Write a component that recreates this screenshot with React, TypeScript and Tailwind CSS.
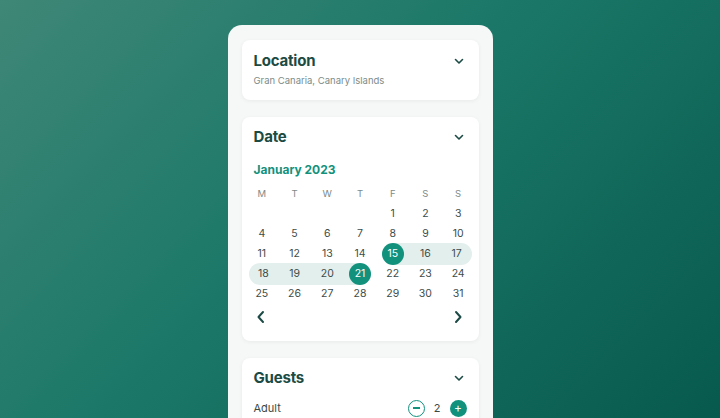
import React from "react";

const font = { fontFamily: "Inter, 'Noto Sans', sans-serif" };

function ChevronDown() {
  return (
    <svg width="12" height="12" viewBox="0 0 12 12" fill="none">
      <path d="M2.5 4.5 6 8l3.5-3.5" stroke="#1b4b44" strokeWidth="1.6" strokeLinecap="round" strokeLinejoin="round" />
    </svg>
  );
}

function Arrow({ dir }: { dir: "left" | "right" }) {
  return (
    <svg width="10" height="14" viewBox="0 0 10 14" fill="none">
      <path
        d={dir === "left" ? "M7 2 2.5 7 7 12" : "M3 2l4.5 5L3 12"}
        stroke="#1b4b44"
        strokeWidth="2"
        strokeLinecap="round"
        strokeLinejoin="round"
      />
    </svg>
  );
}

const weekdays = ["M", "T", "W", "T", "F", "S", "S"];

const weeks: (number | null)[][] = [
  [null, null, null, null, 1, 2, 3],
  [4, 5, 6, 7, 8, 9, 10],
  [11, 12, 13, 14, 15, 16, 17],
  [18, 19, 20, 21, 22, 23, 24],
  [25, 26, 27, 28, 29, 30, 31],
];

const START = 15;
const END = 21;

function DayCell({ day, col }: { day: number | null; col: number }) {
  if (day === null) return <div className="h-5" />;
  const isStart = day === START;
  const isEnd = day === END;
  const inRange = day > START && day < END;
  let band = "w-full";
  if (isStart) band = "w-full bg-[linear-gradient(to_right,transparent_50%,#e3efed_50%)]";
  else if (isEnd) band = "w-full bg-[linear-gradient(to_right,#e3efed_50%,transparent_50%)]";
  else if (inRange) {
    band = "bg-[#e3efed]";
    if (col === 6) band += " rounded-r-full w-[calc(100%-3px)] mr-[3px]";
    else if (col === 0) band += " rounded-l-full w-[calc(100%-3px)] ml-[3px]";
    else band += " w-full";
  }
  return (
    <div className="h-5 flex items-center justify-center">
      <div className={`h-[22px] flex items-center justify-center ${band}`}>
        {isStart || isEnd ? (
          <div className="h-[22px] w-[22px] rounded-full bg-[#12917d] text-white flex items-center justify-center text-[10.5px]">
            {day}
          </div>
        ) : (
          <span className="text-[10.5px] text-[#3d4c49]">{day}</span>
        )}
      </div>
    </div>
  );
}

export default function App() {
  return (
    <div
      style={font}
      className="w-[720px] h-[418px] overflow-hidden bg-[linear-gradient(135deg,#3f8777_0%,#1b7868_45%,#07594d_100%)] flex justify-center pt-[25px]"
    >
      <div className="w-[265px] h-[420px] rounded-t-[14px] bg-[#f6f7f7] px-[14px] pt-[15px] flex flex-col gap-[17px]">
        {/* Location */}
        <div className="bg-white rounded-[8px] shadow-[0_1px_4px_rgba(0,0,0,0.06)] px-3 pt-[11px] pb-[12px]">
          <div className="flex items-center justify-between h-5">
            <span className="text-[15px] font-bold text-[#1b4b44] tracking-[-0.2px]">Location</span>
            <span className="pr-[2px]"><ChevronDown /></span>
          </div>
          <div className="mt-[3px] h-[14px] leading-[14px] text-[9.5px] text-[#7d8c89]">Gran Canaria, Canary Islands</div>
        </div>

        {/* Date */}
        <div className="bg-white rounded-[8px] shadow-[0_1px_4px_rgba(0,0,0,0.06)] px-3 pt-[10px] pb-4">
          <div className="flex items-center justify-between h-5">
            <span className="text-[15px] font-bold text-[#1b4b44] tracking-[-0.2px]">Date</span>
            <span className="pr-[2px]"><ChevronDown /></span>
          </div>
          <div className="mt-[15px] h-4 leading-4 text-[12px] font-bold text-[#12917d]">January 2023</div>
          <div className="-mx-2 mt-2 grid grid-cols-7">
            {weekdays.map((w, i) => (
              <div key={i} className="h-4 leading-4 text-center text-[9.5px] text-[#7d8a88]">
                {w}
              </div>
            ))}
          </div>
          <div className="-mx-2 mt-[2px] flex flex-col">
            {weeks.map((week, r) => (
              <div key={r} className="grid grid-cols-7">
                {week.map((d, c) => (
                  <DayCell key={c} day={d} col={c} />
                ))}
              </div>
            ))}
          </div>
          <div className="mt-[5px] h-4 flex items-center justify-between pl-[2px] pr-[4px]">
            <Arrow dir="left" />
            <Arrow dir="right" />
          </div>
        </div>

        {/* Guests */}
        <div className="bg-white rounded-[8px] shadow-[0_1px_4px_rgba(0,0,0,0.06)] px-3 pt-[10px] pb-4">
          <div className="flex items-center justify-between h-5">
            <span className="text-[15px] font-bold text-[#1b4b44] tracking-[-0.2px]">Guests</span>
            <span className="pr-[2px]"><ChevronDown /></span>
          </div>
          <div className="mt-[10px] flex items-center justify-between h-5">
            <span className="text-[11px] text-[#3a4a47]">Adult</span>
            <div className="flex items-center gap-[9px]">
              <div className="h-[17px] w-[17px] rounded-full border border-[#12917d] flex items-center justify-center">
                <span className="block w-[7px] h-[1.5px] bg-[#12917d]" />
              </div>
              <span className="text-[11px] text-[#3a4a47] w-[7px] text-center">2</span>
              <div className="h-[17px] w-[17px] rounded-full bg-[#12917d] flex items-center justify-center text-white text-[12px] leading-none">
                +
              </div>
            </div>
          </div>
        </div>
      </div>
    </div>
  );
}
